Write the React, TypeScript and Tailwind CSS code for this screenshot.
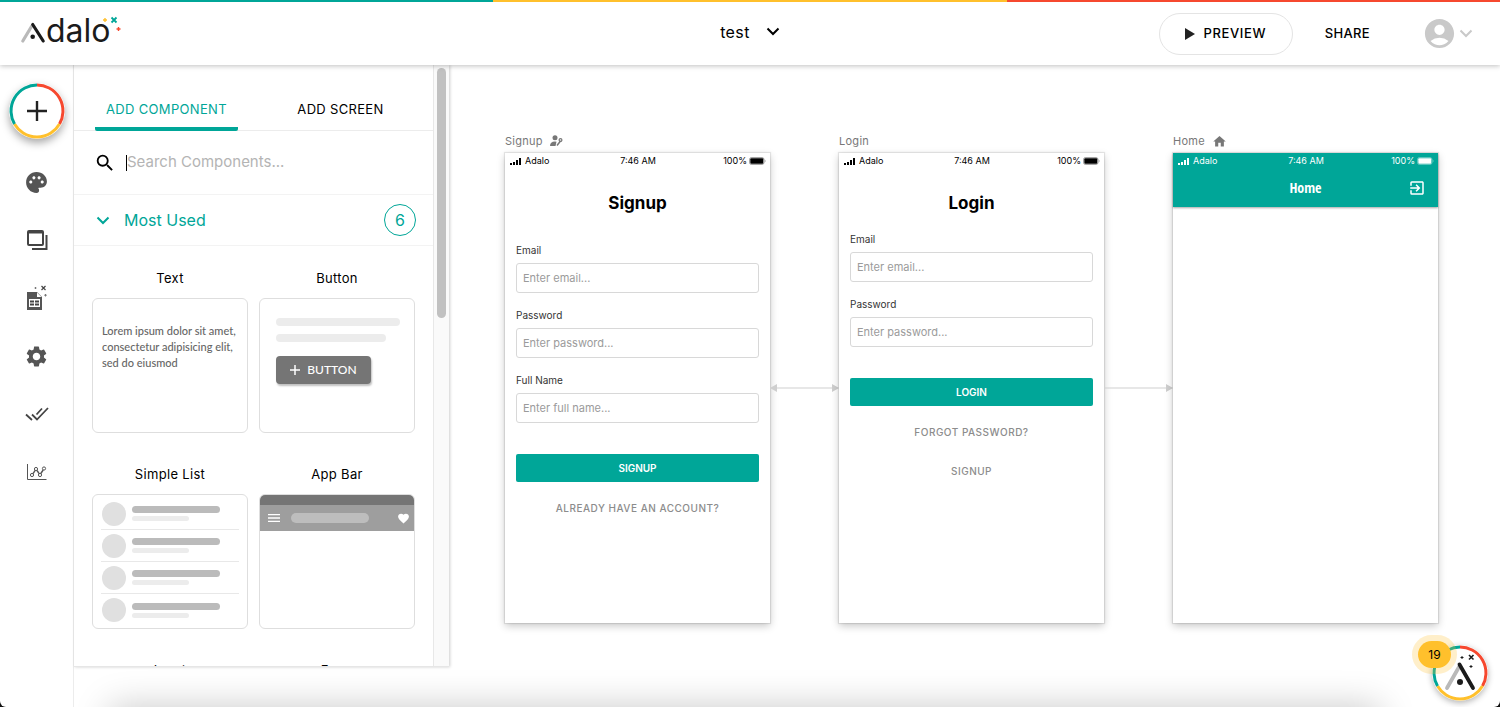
import React, { useId } from 'react';
import { clsx } from 'clsx';
import {
  MdAccountCircle,
  MdExitToApp,
  MdFavorite,
  MdHome,
  MdMenu,
  MdPalette,
  MdSearch,
  MdSettings,
} from 'react-icons/md';

const Chevron = ({ className }: { className?: string }) => (
  <svg viewBox="0 0 14 9" className={clsx("h-[9px] w-[14px] fill-none stroke-current stroke-2", className)}>
    <path d="M1.5 1.5 7 7l5.5-5.5" />
  </svg>
);

const Ring = ({ children }: { children: React.ReactNode }) => (
  <svg viewBox="0 0 56 56" className="size-14 fill-none">
    <circle cx="28" cy="28" r="27" fill="#fff" />
    <path d="M28 2A26 26 0 0 1 50.5 41" stroke="#f6482f" strokeWidth="3" />
    <path d="M50.5 41A26 26 0 0 1 5.5 41" stroke="#ffc02c" strokeWidth="3" />
    <path d="M5.5 41A26 26 0 0 1 28 2" stroke="#00a698" strokeWidth="3" />
    {children}
  </svg>
);

const Logo = () => (
  <a href="#" aria-label="Adalo" className="relative mb-[6px] flex h-8 items-end">
    <svg viewBox="0 0 26 26" className="h-[26px] w-[26px] fill-none" strokeLinecap="round" strokeWidth="3.2">
      <path d="M2.8 20 11.500 5.500" stroke="#b9b9b9" />
      <path d="M12.700 3.500 23.200 20" stroke="#1b1b1b" />
      <circle cx="12.700" cy="15.700" r="2.300" fill="#1b1b1b" />
    </svg>
    <span className="text-[32px] leading-[32px] text-[#1b1b1b]">dalo</span>
    <svg viewBox="0 0 18 18" className="absolute -top-[2px] left-[83px] size-[18px] fill-none">
      <path d="m8.500 4.500 5 5m0-5-5 5" stroke="#00a698" strokeWidth="1.8" />
      <path d="M2 5v4M0 7h4" stroke="#ffc02c" strokeWidth="1.4" />
      <path d="M15.500 14v4M13.500 16h4" stroke="#f6482f" strokeWidth="1.4" />
    </svg>
  </a>
);

const Header = () => (
  <header className="relative z-30 bg-white shadow-[0_1px_5px_rgba(0,0,0,0.25)]">
    <div className="grid h-[2px] grid-cols-[493fr_514fr_493fr]">
      <div className="bg-[#00a698]" />
      <div className="bg-[#ffc02c]" />
      <div className="bg-[#f6482f]" />
    </div>
    <div className="grid h-[63px] grid-cols-3 items-center px-5">
      <Logo />
      <button className="flex items-center gap-4 justify-self-center pb-1 text-base tracking-wide">
        test
        <Chevron />
      </button>
      <div className="flex items-center justify-self-end pr-[7px] text-[13px]">
        <button className="flex h-[42px] w-[134px] items-center justify-center gap-2 rounded-full border border-[#e4e4e4] font-medium tracking-wider">
          <svg viewBox="0 0 10 12" className="h-3 w-[10px] fill-[#222]">
            <path d="M0 0v12l10-6z" />
          </svg>
          PREVIEW
        </button>
        <button className="ml-8 font-medium tracking-wide">SHARE</button>
        <button aria-label="Account" className="ml-[52px] flex items-center gap-[2px] text-[#c9c9c9]">
          <MdAccountCircle size={35} />
          <Chevron />
        </button>
      </div>
    </div>
  </header>
);

const RailButton = ({ label, children }: { label: string; children: React.ReactNode }) => (
  <button aria-label={label} className="flex size-[30px] items-center justify-center text-[#555]">
    {children}
  </button>
);

const Rail = () => (
  <nav className="flex w-[74px] shrink-0 flex-col items-center gap-7 border-r border-[#ececec] pt-[18px]">
    <button aria-label="Add" className="rounded-full shadow-[0_4px_9px_rgba(0,0,0,0.35)]">
      <Ring>
        <path d="M28 18v20M18 28h20" stroke="#222" strokeWidth="2.4" />
      </Ring>
    </button>
    <RailButton label="Branding">
      <MdPalette size={25} />
    </RailButton>
    <RailButton label="Screens">
      <svg viewBox="0 0 22 22" className="size-[22px] fill-none stroke-[#444] stroke-2">
        <rect x="2" y="2" width="15" height="14" rx="1" />
        <path d="M2 3.500h15" />
        <path d="M6 20h14.500V6" />
      </svg>
    </RailButton>
    <RailButton label="Database">
      <svg viewBox="0 0 22 26" className="h-[26px] w-[22px] fill-none">
        <path d="M1 7h10l5 5v13H1z" fill="#555" />
        <path d="M11 7.500V12h4.500z" fill="#fff" />
        <path d="M3 14h11v8H3z" fill="#fff" />
        <path d="M4 16.500h4m1 0h4M4 19.500h4m1 0h4" stroke="#444" strokeWidth="1.8" />
        <path d="m15.500 1 4 4m0-4-4 4" stroke="#444" strokeWidth="1.2" />
        <path d="M9.500 2v2M8.500 3h2M19.500 9v2.500M18.200 10.200h2.600" stroke="#777" />
      </svg>
    </RailButton>
    <RailButton label="Settings">
      <MdSettings size={25} />
    </RailButton>
    <RailButton label="Publish">
      <svg viewBox="0 0 24 14" className="h-[14px] w-6 fill-none stroke-[#444] stroke-[1.8]">
        <path d="m1 7.500 6 5.500M7 7.500l5 5L23 1M11.500 7.500 17 1.500" />
      </svg>
    </RailButton>
    <RailButton label="Analytics">
      <svg viewBox="0 0 22 18" className="h-[18px] w-[22px] fill-none stroke-[#555]">
        <path d="M1.500 1v15.500h19" />
        <path d="m7 10.700 2.200-3.300M11 7.500l2.200 3.200M14.800 10.500l2.400-3.500" strokeWidth="1.400" />
        <circle cx="6" cy="12" r="1.600" />
        <circle cx="10" cy="6" r="1.600" />
        <circle cx="14" cy="12" r="1.600" />
        <circle cx="18" cy="5.500" r="1.600" />
      </svg>
    </RailButton>
  </nav>
);

const ComponentCard = ({ title, children }: { title: string; children?: React.ReactNode }) => (
  <div className="flex flex-col gap-[10px]">
    <h3 className="text-center text-[13px] leading-5 tracking-wide">{title}</h3>
    <div className="h-[135px] overflow-hidden rounded-md border border-[#dedede]">{children}</div>
  </div>
);

const Panel = () => (
  <aside className="z-10 mb-10 flex w-[375px] shrink-0 border-b border-[#e6e6e6] bg-white shadow-[1px_0_3px_rgba(0,0,0,0.2)]">
    <div className="min-w-0 flex-1 overflow-hidden">
      <div className="flex h-[66px] items-end gap-[31px] border-b border-[#ececec] px-[21px] text-[13px] leading-5 tracking-wide">
        <button className="-mb-px flex-1 rounded-b-xs border-b-4 border-[#00a698] pb-2 whitespace-nowrap text-[#00a698]">
          ADD COMPONENT
        </button>
        <button className="flex-1 pb-[11px] whitespace-nowrap">ADD SCREEN</button>
      </div>
      <div className="flex h-16 items-center border-b border-[#f3f3f3] pl-5">
        <MdSearch size={22} />
        <span className="ml-[10px] h-4 w-px bg-black" />
        <input
          type="text"
          aria-label="Search Components"
          placeholder="Search Components..."
          className="min-w-0 flex-1 text-[15px] outline-none placeholder:text-[#b4b4b4]"
        />
      </div>
      <button className="flex h-[51px] w-full items-center border-b border-[#f3f3f3] pr-[17px] pl-[22px] text-base text-[#00a698]">
        <Chevron />
        <span className="ml-[14px]">Most Used</span>
        <span className="ml-auto flex size-8 items-center justify-center rounded-full border border-[#00a698]">6</span>
      </button>
      <div className="grid h-0 grid-cols-2 gap-x-[11px] gap-y-[31px] px-[18px] pt-[22px]">
        <ComponentCard title="Text">
          <p className="py-6 pl-[9px] font-[Lato] text-[11px] leading-4 font-medium whitespace-nowrap text-[#666]">
            Lorem ipsum dolor sit amet,
            <br />
            consectetur adipisicing elit,
            <br />
            sed do eiusmod
          </p>
        </ComponentCard>
        <ComponentCard title="Button">
          <div className="flex flex-col items-start px-4 pt-[19px]">
            <div className="h-2 w-[124px] rounded-full bg-[#ececec]" />
            <div className="mt-2 h-2 w-[110px] rounded-full bg-[#ececec]" />
            <div className="mt-[14px] flex h-[28px] w-[95px] items-center justify-center gap-[7px] rounded bg-[#757575] font-[Lato] text-xs font-medium text-white shadow-[1px_2px_2px_rgba(0,0,0,0.25)]">
              <svg viewBox="0 0 10 10" className="size-[10px] stroke-white stroke-[1.5]">
                <path d="M5 0v10M0 5h10" />
              </svg>
              BUTTON
            </div>
          </div>
        </ComponentCard>
        <ComponentCard title="Simple List">
          <div className="divide-y divide-[#e8e8e8] px-2 pt-[3px]">
            {[1, 2, 3, 4].map((row) => (
              <div key={row} className="flex h-8 items-center gap-[6px] pl-px">
                <div className="size-6 rounded-full bg-[#e0e0e0]" />
                <div className="flex flex-col gap-[3px]">
                  <div className="h-[7px] w-[88px] rounded-full bg-[#bbb]" />
                  <div className="h-[5px] w-[57px] rounded-full bg-[#ececec]" />
                </div>
              </div>
            ))}
          </div>
        </ComponentCard>
        <ComponentCard title="App Bar">
          <div className="h-[10px] bg-[#757575]" />
          <div className="flex h-[26px] items-center bg-[#9e9e9e] pr-1 pl-[6px] text-white">
            <MdMenu size={16} />
            <div className="ml-[9px] h-[10px] w-[78px] rounded-full bg-[#bdbdbd]" />
            <MdFavorite size={13} className="ml-auto" />
          </div>
        </ComponentCard>
        <ComponentCard title="Input" />
        <ComponentCard title="Form" />
      </div>
    </div>
    <div className="w-4 border-l border-[#e8e8e8] bg-[#fafafa] px-[3px] pt-[3px]">
      <div className="h-[250px] w-[9px] rounded-full bg-[#c1c1c1]" />
    </div>
  </aside>
);

const StatusBar = () => (
  <div className="grid h-4 grid-cols-3 items-center pr-1 pl-[5px] text-[9px] leading-4">
    <span className="flex items-center gap-1">
      <svg viewBox="0 0 11 7" className="h-[7px] w-[11px] fill-current">
        <path d="M0 5h2v2H0zM3 4h2v3H3zM6 2h2v5H6zM9 0h2v7H9z" />
      </svg>
      Adalo
    </span>
    <span className="text-center">7:46 AM</span>
    <span className="flex items-center justify-end gap-[2px]">
      100%
      <svg viewBox="0 0 17 8" className="h-2 w-[17px] fill-current">
        <rect x=".5" y=".5" width="14.500" height="7" rx="2" className="fill-none stroke-current" opacity=".35" />
        <rect x="1.300" y="1.300" width="13" height="5.400" rx="1" />
        <path d="M15.800 2.500q1.500 1.500 0 3z" opacity=".4" />
      </svg>
    </span>
  </div>
);

interface ScreenProps {
  name: string;
  icon?: React.ReactNode;
  children: React.ReactNode;
}

const Screen = ({ name, icon, children }: ScreenProps) => (
  <section className="w-[265px] shrink-0">
    <div className="flex h-5 items-center gap-[7px] text-[11px] tracking-wide text-[#777]">
      {name}
      {icon}
    </div>
    <div className="mt-[2px] h-[470px] bg-white shadow-[0_0_1px_1px_rgba(0,0,0,0.09),0_3px_8px_rgba(0,0,0,0.22)]">
      {children}
    </div>
  </section>
);

const Field = ({ label, placeholder }: { label: string; placeholder: string }) => {
  const id = useId();
  return (
    <div className="flex flex-col gap-[5px]">
      <label htmlFor={id} className="text-[10px] leading-[15px] text-[#333]">{label}</label>
      <input
        id={id}
        type="text"
        placeholder={placeholder}
        className="h-[30px] rounded-[3px] border border-[#d8d8d8] px-[6px] text-[11px] placeholder:text-[#9b9b9b]"
      />
    </div>
  );
};

const PrimaryButton = ({ children }: { children: React.ReactNode }) => (
  <button className="mt-[31px] h-7 rounded-xs bg-[#00a698] text-[10px] font-semibold text-white">{children}</button>
);

const LinkButton = ({ children }: { children: React.ReactNode }) => (
  <button className="text-[10px] leading-[15px] font-medium tracking-wider text-[#8c8c8c]">{children}</button>
);

const Arrow = ({ both }: { both?: boolean }) => (
  <div className="mt-[22px] flex h-[470px] w-[69px] shrink-0 items-center">
    <svg viewBox="0 0 69 8" className="h-2 w-full fill-[#cfcfcf]">
      <path d="M1 3.500h66v1H1z" />
      <path d="M62 0v8l7-4z" />
      {both && <path d="M7 0v8L0 4z" />}
    </svg>
  </div>
);

const Canvas = () => (
  <main className="flex min-w-0 flex-1 items-start overflow-hidden pt-[66px] pl-14">
    <Screen
      name="Signup"
      icon={
        <svg viewBox="0 0 13 12" className="h-3 w-[13px] fill-[#777]">
          <circle cx="5" cy="2.800" r="2.500" />
          <path d="M0 11q0-4.500 5-4.500l1.500.2L5.500 11z" />
          <path d="m7 10.500 3.500-4.500" className="stroke-[#777] stroke-[1.5]" />
          <circle cx="10.500" cy="5" r="1.400" className="fill-none stroke-[#777] stroke-[1.2]" />
        </svg>
      }
    >
      <StatusBar />
      <div className="flex flex-col px-[11px] pt-5">
        <h2 className="text-center text-[17px] leading-7 font-bold">Signup</h2>
        <div className="mt-[26px] flex flex-col gap-[15px]">
          <Field label="Email" placeholder="Enter email..." />
          <Field label="Password" placeholder="Enter password..." />
          <Field label="Full Name" placeholder="Enter full name..." />
        </div>
        <PrimaryButton>SIGNUP</PrimaryButton>
        <div className="mt-[19px] flex flex-col">
          <LinkButton>ALREADY HAVE AN ACCOUNT?</LinkButton>
        </div>
      </div>
    </Screen>
    <Arrow both />
    <Screen name="Login">
      <StatusBar />
      <div className="flex flex-col px-[11px] pt-5">
        <h2 className="text-center text-[17px] leading-7 font-bold">Login</h2>
        <div className="mt-[15px] flex flex-col gap-[15px]">
          <Field label="Email" placeholder="Enter email..." />
          <Field label="Password" placeholder="Enter password..." />
        </div>
        <PrimaryButton>LOGIN</PrimaryButton>
        <div className="mt-[19px] flex flex-col gap-6">
          <LinkButton>FORGOT PASSWORD?</LinkButton>
          <LinkButton>SIGNUP</LinkButton>
        </div>
      </div>
    </Screen>
    <Arrow />
    <Screen name="Home" icon={<MdHome size={15} />}>
      <div className="bg-[#00a698] text-white shadow-[0_1px_2px_rgba(0,0,0,0.35)]">
        <StatusBar />
        <div className="grid h-[38px] grid-cols-3 items-center px-3">
          <h2 className="col-start-2 text-center font-['Liberation_Sans_Narrow','Open_Sans_Condensed',sans-serif] text-sm font-bold">
            Home
          </h2>
          <button aria-label="Log out" className="justify-self-end">
            <MdExitToApp size={18} />
          </button>
        </div>
      </div>
    </Screen>
  </main>
);

const HelpButton = () => (
  <button aria-label="Help, 19 new" className="absolute right-3 bottom-[6px] z-30 rounded-full shadow-[0_2px_6px_rgba(0,0,0,0.3)]">
    <Ring>
      <g strokeLinecap="round" strokeWidth="3.800">
        <path d="M15 43 27 22" stroke="#b9b9b9" />
        <path d="m27.500 19.500 13.500 23.500" stroke="#1b1b1b" />
      </g>
      <circle cx="28" cy="37" r="3" fill="#1b1b1b" />
      <path d="m37 10 4.500 4.500m0-4.500L37 14.500" stroke="#1b1b1b" strokeWidth="1.600" />
      <path d="M30 11v3M28.500 12.500h3M39 20v3M37.500 21.500h3" stroke="#1b1b1b" />
    </Ring>
    <span className="absolute -top-[10px] -left-5 rounded-full bg-[#ffc02c]/25 p-[6px]">
      <span className="flex h-[27px] w-[33px] items-center justify-center rounded-full bg-[#ffc02c] text-xs">19</span>
    </span>
  </button>
);

const App = () => (
  <div className="h-screen bg-[#111]">
    <div className="relative flex h-full flex-col overflow-hidden rounded-b-md bg-white font-[Inter,sans-serif] text-black">
      <Header />
      <div className="flex min-h-0 flex-1">
        <Rail />
        <Panel />
        <Canvas />
      </div>
      <div className="pointer-events-none absolute top-full right-[120px] left-[110px] h-10 shadow-[0_0_36px_rgba(0,0,0,0.22)]" />
      <HelpButton />
    </div>
  </div>
);

export default App;
